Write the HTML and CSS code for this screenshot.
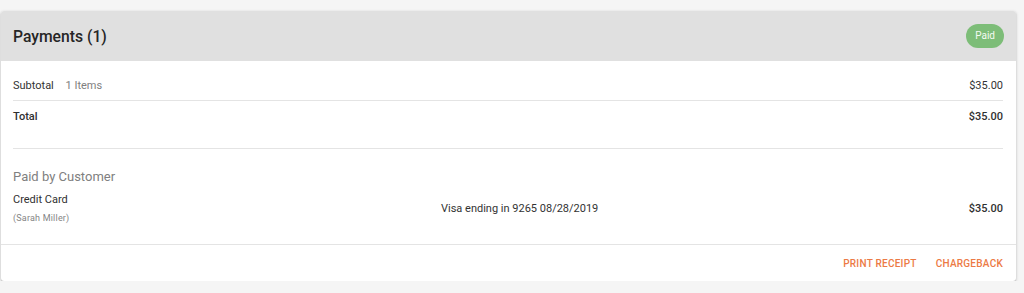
FILE: index.html
```html
<!DOCTYPE html>
<html>
<head>
<meta charset="utf-8">
<link rel="stylesheet" href="styles.css">
</head>
<body>
<div class="card">
  <div class="card-header">
    <div class="title">Payments (1)</div>
    <div class="badge">Paid</div>
  </div>
  <div class="card-body">
    <div class="row row-sub">
      <div class="label">Subtotal <span class="muted">1 Items</span></div>
      <div class="amount">$35.00</div>
    </div>
    <div class="row row-total">
      <div class="label strong">Total</div>
      <div class="amount strong">$35.00</div>
    </div>
    <div class="divider"></div>
    <div class="section-title">Paid by Customer</div>
    <div class="pay-row">
      <div class="pay-left">
        <div class="method">Credit Card</div>
        <div class="payer">(Sarah Miller)</div>
      </div>
      <div class="pay-mid">Visa ending in 9265 08/28/2019</div>
      <div class="amount strong">$35.00</div>
    </div>
  </div>
  <div class="card-footer">
    <button class="action">Print Receipt</button>
    <button class="action">Chargeback</button>
  </div>
</div>
</body>
</html>
```
FILE: styles.css
```css
html, body {
  margin: 0;
  padding: 0;
  background: #f5f5f5;
  font-family: Roboto, "Liberation Sans", sans-serif;
  color: #212121;
}
.card {
  margin: 11px 8px 0 1px;
  width: 1015px;
  background: #fff;
  border-radius: 3px;
  box-shadow: 0 1px 3px rgba(0,0,0,0.25), 0 1px 1px rgba(0,0,0,0.1);
  overflow: hidden;
}
.card-header {
  height: 50px;
  background: #e0e0e0;
  display: flex;
  align-items: center;
  justify-content: space-between;
  padding: 0 12px;
}
.title {
  font-size: 15.7px;
  font-weight: 500;
  color: #262626;
}
.badge {
  background: #7dbd78;
  color: #f4fbf3;
  font-size: 10px;
  height: 24px;
  line-height: 24px;
  padding: 0 9px;
  border-radius: 12px;
}
.card-body {
  padding: 10px 13px 0 12px;
}
.row {
  display: flex;
  justify-content: space-between;
  align-items: center;
  height: 30px;
  font-size: 11px;
  color: #333;
}
.row-sub {
  border-bottom: 1px solid #e4e4e4;
  height: 29px;
}
.muted {
  color: #808080;
  margin-left: 9px;
}
.strong {
  font-weight: 500;
  color: #303030;
}
.amount {
  font-size: 11px;
}
.divider {
  height: 1px;
  background: #e4e4e4;
  margin-top: 17px;
}
.section-title {
  font-size: 13px;
  color: #808080;
  margin-top: 20px;
  line-height: 16px;
}
.pay-row {
  display: grid;
  grid-template-columns: 428px 1fr auto;
  align-items: center;
  margin-top: 8px;
  padding-bottom: 21px;
}
.method {
  font-size: 11px;
  color: #303030;
  line-height: 14px;
}
.payer {
  font-size: 9px;
  color: #858585;
  margin-top: 6px;
  letter-spacing: 0.2px;
}
.pay-mid {
  font-size: 11px;
  color: #333;
}
.card-footer {
  border-top: 1px solid #e4e4e4;
  height: 36px;
  display: flex;
  justify-content: flex-end;
  align-items: center;
  padding-right: 13px;
  gap: 19px;
}
.action {
  background: none;
  border: none;
  padding: 0;
  font-family: Roboto, "Liberation Sans", sans-serif;
  text-transform: uppercase;
  font-size: 10px;
  font-weight: 500;
  letter-spacing: 0.25px;
  color: #ec7a45;
  cursor: pointer;
}
```
